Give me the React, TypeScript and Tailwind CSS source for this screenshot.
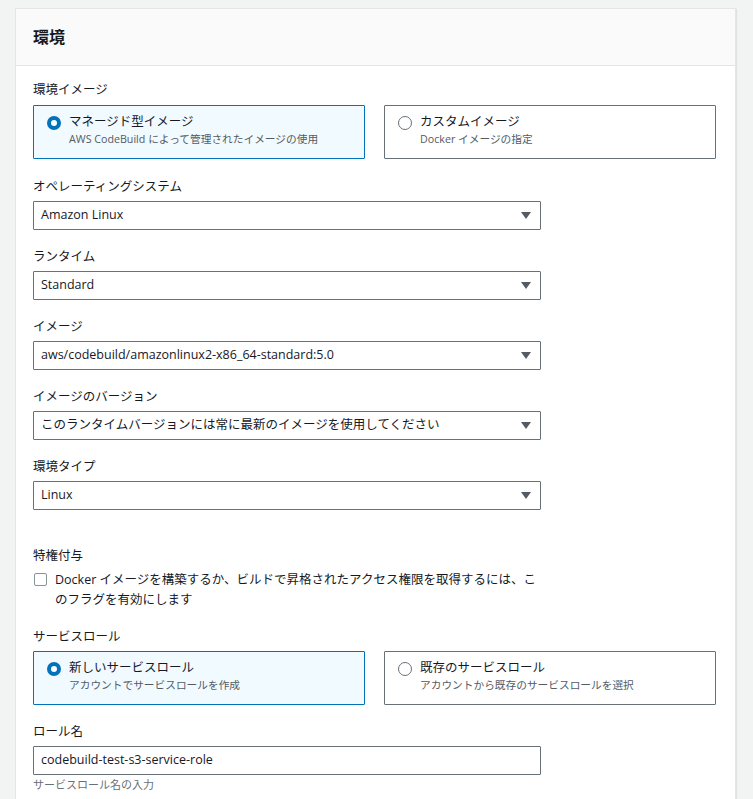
import React from "react";

const font = { fontFamily: '"Open Sans", "Noto Sans CJK JP", sans-serif' };

function Caret() {
  return (
    <svg width="10" height="7" viewBox="0 0 10 7" className="shrink-0">
      <path d="M0 0 H10 L5 7 Z" fill="#545b64" />
    </svg>
  );
}

function Label({ children, className = "" }: { children: React.ReactNode; className?: string }) {
  return <div className={"text-[12.5px] leading-[18px] text-[#16191f] " + className}>{children}</div>;
}

function Select({ value }: { value: string }) {
  return (
    <div className="mt-[5px] flex h-[29px] w-[508px] items-center justify-between border border-[#687078] bg-white pl-[7px] pr-[9px] rounded-[1px]">
      <span className="text-[12.5px] text-[#16191f]">{value}</span>
      <Caret />
    </div>
  );
}

function Field({ label, value, className = "" }: { label: string; value: string; className?: string }) {
  return (
    <div className={className}>
      <Label>{label}</Label>
      <Select value={value} />
    </div>
  );
}

function Tile({ selected, title, desc }: { selected: boolean; title: string; desc: string }) {
  return (
    <div
      className={
        "flex h-[54px] flex-1 items-start gap-[8px] border pl-[13px] pt-[7px] rounded-[1px] " +
        (selected ? "border-[#0073bb] bg-[#f1faff]" : "border-[#687078] bg-white")
      }
    >
      {selected ? (
        <div className="mt-[3px] h-[14px] w-[14px] shrink-0 rounded-full border-[4px] border-[#0073bb] bg-white" />
      ) : (
        <div className="mt-[3px] h-[14px] w-[14px] shrink-0 rounded-full border border-[#687078] bg-white" />
      )}
      <div className="flex flex-col">
        <span className="text-[12.5px] leading-[18px] text-[#16191f]">{title}</span>
        <span className="text-[10.7px] leading-[16px] text-[#545b64]">{desc}</span>
      </div>
    </div>
  );
}

export default function App() {
  return (
    <div className="min-h-[799px] bg-[#f2f3f3] pl-[15px] pt-[8px]" style={font}>
      <div className="w-[721px] border border-[#e3e6e6] bg-white shadow-[1px_1px_1px_rgba(0,28,36,0.08)]">
        <div className="flex h-[57px] items-center border-b border-[#e3e6e6] bg-[#fafafa] pl-[17px] pb-[1px]">
          <h2 className="text-[16px] font-bold text-[#16191f]">環境</h2>
        </div>
        <div className="pl-[17px] pr-[19px] pt-[15px] pb-[30px]">
          <Label>環境イメージ</Label>
          <div className="mt-[6px] flex gap-[19px]">
            <Tile selected title="マネージド型イメージ" desc="AWS CodeBuild によって管理されたイメージの使用" />
            <Tile selected={false} title="カスタムイメージ" desc="Docker イメージの指定" />
          </div>

          <Field className="mt-[19px]" label="オペレーティングシステム" value="Amazon Linux" />
          <Field className="mt-[18px]" label="ランタイム" value="Standard" />
          <Field className="mt-[18px]" label="イメージ" value="aws/codebuild/amazonlinux2-x86_64-standard:5.0" />
          <Field className="mt-[18px]" label="イメージのバージョン" value="このランタイムバージョンには常に最新のイメージを使用してください" />
          <Field className="mt-[18px]" label="環境タイプ" value="Linux" />

          <Label className="mt-[37px]">特権付与</Label>
          <div className="mt-[5px] flex w-[508px] items-start gap-[8px]">
            <div className="mt-[3px] ml-[1px] h-[13px] w-[13px] shrink-0 rounded-[2px] border border-[#879596] bg-white" />
            <p className="text-[12.5px] leading-[20px] text-[#16191f]">
              Docker イメージを構築するか、ビルドで昇格されたアクセス権限を取得するには、こ
              <br />
              のフラグを有効にします
            </p>
          </div>

          <Label className="mt-[18px]">サービスロール</Label>
          <div className="mt-[5px] flex gap-[19px]">
            <Tile selected title="新しいサービスロール" desc="アカウントでサービスロールを作成" />
            <Tile selected={false} title="既存のサービスロール" desc="アカウントから既存のサービスロールを選択" />
          </div>

          <Label className="mt-[18px]">ロール名</Label>
          <div className="mt-[5px] flex h-[29px] w-[508px] items-center border border-[#687078] bg-white pl-[7px] rounded-[1px]">
            <span className="text-[12.5px] text-[#16191f]">codebuild-test-s3-service-role</span>
          </div>
          <div className="mt-[3px] text-[11px] leading-[14px] text-[#687078]">サービスロール名の入力</div>
        </div>
      </div>
    </div>
  );
}
